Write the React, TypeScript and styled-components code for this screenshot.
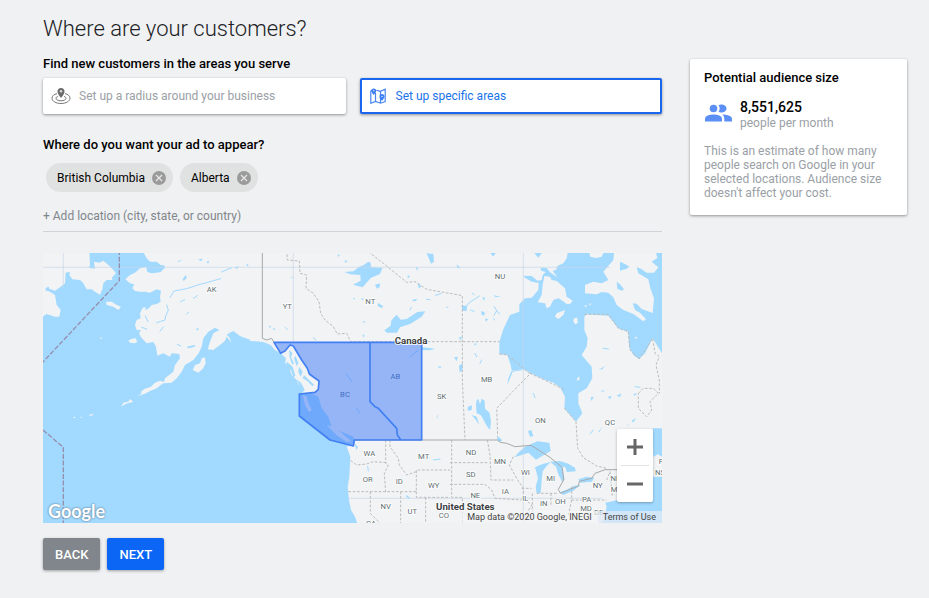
import React, { useState } from "react";
import styled, { createGlobalStyle, css } from "styled-components";

const GlobalStyle = createGlobalStyle`
  *, *::before, *::after { box-sizing: border-box; }
  body { margin: 0; background: #f0f1f3; color: #000; font-family: Roboto, sans-serif; font-size: 12px; }
  h1, h2, p, ul { margin: 0; padding: 0; }
  button, input { font: inherit; }
  button { cursor: pointer; }
`;

const Page = styled.div`
  display: flex;
  align-items: flex-start;
  gap: 28px;
  padding: 15px 22px 28px 43px;
`;
const Main = styled.main`
  flex: 1;
  min-width: 0;
`;
const Title = styled.h1`
  font-size: 22px;
  font-weight: 300;
  line-height: 28px;
  color: #202124;
`;
const SectionTitle = styled.h2`
  font-size: 13px;
  font-weight: 500;
  line-height: 16px;
`;
const AreaSection = styled.section`
  margin-top: 13px;
`;
const Options = styled.div`
  display: grid;
  grid-template-columns: 1fr 1fr;
  gap: 14px;
  margin-top: 6px;
`;
const Option = styled.button<{ $selected?: boolean }>`
  display: flex;
  align-items: center;
  gap: 8px;
  height: 36px;
  padding: 0 6px;
  border: 2px solid #fff;
  border-radius: 2px;
  background: #fff;
  color: #9aa0a6;
  font-size: 12px;
  text-align: left;
  box-shadow: 0 1px 3px rgba(0, 0, 0, 0.4);
  ${(p) => p.$selected && css`
    border-color: #1a66ee;
    color: #1a73e8;
  `}
`;
const LocationSection = styled.section`
  margin-top: 23px;
`;
const Chips = styled.ul`
  display: flex;
  gap: 7px;
  margin: 10px 0 0 3px;
  list-style: none;
`;
const Chip = styled.li`
  display: flex;
  align-items: center;
  gap: 7px;
  height: 29px;
  padding: 0 7px 0 11px;
  border-radius: 15px;
  background: #e0e2e1;
`;
const RemoveButton = styled.button`
  display: flex;
  padding: 0;
  border: 0;
  background: none;
`;
const LocationInput = styled.input`
  display: block;
  width: 100%;
  height: 32px;
  margin-top: 8px;
  padding: 0;
  border: 0;
  border-bottom: 1px solid #d0d2d5;
  background: none;
  outline: none;
  color: #3c4043;
  &::placeholder { color: #80868b; opacity: 1; }
`;
const MapFrame = styled.section`
  position: relative;
  height: 270px;
  margin-top: 21px;
  overflow: hidden;
  background: #a2daff;
`;
const MapSvg = styled.svg`
  display: block;
  width: 100%;
  height: 100%;
`;
const MapLogo = styled.div`
  position: absolute;
  left: 5px;
  bottom: 0;
  color: #fff;
  font-family: Lato, sans-serif;
  font-size: 18px;
  font-weight: 700;
  line-height: 24px;
  text-shadow: 0 0 2px #6d8ca6, 0 0 2px #6d8ca6;
`;
const ZoomControl = styled.div`
  position: absolute;
  right: 9px;
  bottom: 21px;
  width: 36px;
  padding: 0 4px;
  border-radius: 2px;
  background: #fff;
  box-shadow: 0 1px 3px rgba(0, 0, 0, 0.3);
`;
const ZoomButton = styled.button`
  display: flex;
  align-items: center;
  justify-content: center;
  width: 100%;
  height: 36px;
  padding: 0;
  border: 0;
  background: none;
  & + & { height: 37px; border-top: 1px solid #e2e2e2; }
`;
const Attribution = styled.div`
  position: absolute;
  right: 0;
  bottom: 0;
  display: flex;
  font-size: 9px;
  line-height: 12px;
  color: #444;
`;
const Credit = styled.span`
  padding: 0 6px;
  background: rgba(245, 245, 245, 0.6);
`;
const Terms = styled.a`
  padding: 0 6px 0 5px;
  background: rgba(225, 234, 245, 0.75);
  color: #444;
  text-decoration: none;
`;
const Actions = styled.div`
  display: flex;
  gap: 7px;
  margin-top: 15px;
`;
const ActionButton = styled.button<{ $primary?: boolean }>`
  height: 32px;
  padding: 0 12px;
  border: 0;
  border-radius: 2px;
  background: ${(p) => (p.$primary ? "#0b66f5" : "#80868b")};
  color: #fff;
  font-size: 13px;
  font-weight: 500;
  box-shadow: 0 1px 3px rgba(0, 0, 0, 0.35);
`;
const AudienceCard = styled.aside`
  flex: 0 0 217px;
  margin-top: 44px;
  padding: 11px 14px 15px;
  border-radius: 2px;
  background: #fff;
  box-shadow: 0 1px 3px rgba(0, 0, 0, 0.4);
`;
const CardTitle = styled.h2`
  font-size: 13px;
  font-weight: 500;
  line-height: 16px;
`;
const Audience = styled.div`
  display: flex;
  align-items: flex-start;
  gap: 8px;
  margin-top: 13px;
  & > svg { margin-top: 5px; }
`;
const AudienceCount = styled.p`
  font-size: 14px;
  font-weight: 500;
  line-height: 16px;
`;
const Muted = styled.p`
  font-size: 12px;
  line-height: 16px;
  color: #9aa0a6;
`;
const Note = styled(Muted)`
  margin-top: 13px;
  line-height: 14px;
`;

const RadiusIcon = () => (
  <svg width="20" height="18" viewBox="0 0 20 18" fill="none" aria-hidden="true">
    <path d="M6 6.600C3 7.300 1 9 1 11.200C1 14.200 5 16.500 10 16.500S19 14.200 19 11.200C19 9 17 7.300 14 6.600" stroke="#777" />
    <path d="M7 9.400C5.700 9.800 5 10.400 5 11.300C5 12.700 7.200 13.800 10 13.800S15 12.700 15 11.300C15 10.400 14.300 9.800 13 9.400" stroke="#777" />
    <path d="M10 1C7.900 1 6.500 2.500 6.500 4.500C6.500 7 10 11 10 11S13.500 7 13.500 4.500C13.500 2.500 12.100 1 10 1Z" fill="#6b6b6b" />
    <circle cx="10" cy="4.300" r="1.200" fill="#ddd" />
  </svg>
);

const AreasIcon = () => (
  <svg width="20" height="16" viewBox="-2 0 20 16" fill="none" aria-hidden="true">
    <g stroke="#4a86f0" strokeWidth="1.200">
      <path d="M2.500 2L.8 3V15.200L5.500 13.500L10.500 15.200L15.200 13.500V1.200L12.500 2.400M6.500 2.200L10 3.400L12.500 2.400M5.500 5V13.500M10.500 3.500V15" />
    </g>
    <path d="M3.800 .4C2.300 .4 1.300 1.400 1.300 2.800C1.300 4.500 3.800 7 3.800 7S6.300 4.500 6.300 2.800C6.300 1.400 5.300 .4 3.800 .4ZM12 6C10.500 6 9.500 7.100 9.500 8.500C9.500 10.200 12 12.800 12 12.800S14.500 10.200 14.500 8.500C14.500 7.100 13.500 6 12 6Z" fill="#3b7cf0" />
    <circle cx="3.800" cy="2.800" r=".8" fill="#cfe0ff" /><circle cx="12" cy="8.500" r=".8" fill="#cfe0ff" />
  </svg>
);

const RemoveIcon = () => (
  <svg width="14" height="14" viewBox="0 0 14 14" aria-hidden="true">
    <circle cx="7" cy="7" r="7" fill="#9b9b9b" />
    <path d="M4 4L10 10M10 4L4 10" stroke="#e8e8e8" strokeWidth="1.200" />
  </svg>
);

const PeopleIcon = () => (
  <svg width="28" height="18" viewBox="0 0 28 18" fill="#5b8ff5" aria-hidden="true">
    <circle cx="9.500" cy="4.500" r="3.800" />
    <path d="M14.500 7.800C16.100 6 16.100 3 14.500 1.200C16.800 -.2 22.500 .6 22.500 4.500S16.800 9.200 14.500 7.800Z" />
    <path d="M1 17.500V14.700C1 11.600 6 10.400 9.500 10.400S18 11.600 18 14.700V17.500Z" />
    <path d="M18.200 10.500C22 10.500 28 11.800 28 14.700V17.500H20.300V14.700C20.300 12.800 19.600 11.500 18.200 10.500Z" />
  </svg>
);

const LAND = "#f1f3f4";
const WATER = "#a2daff";

/* Each map column is drawn in its own local space and shifted into the sheet. */
const COLUMNS = { west: -9, middle: 621, east: 1221 };
type Column = keyof typeof COLUMNS;

const LABELS: [Column, number, number, string][] = [
  ["west", 515, 118, "AK"], ["middle", 112, 169, "YT"], ["middle", 361, 153, "NT"],
  ["middle", 575, 440, "SK"], ["middle", 358, 611, "WA"], ["middle", 353, 687, "OR"],
  ["middle", 448, 694, "ID"], ["middle", 521, 619, "MT"], ["middle", 551, 705, "WY"],
  ["middle", 407, 770, "NV"], ["middle", 487, 784, "UT"], ["middle", 582, 797, "CO"],
  ["middle", 363, 821, "CA"], ["east", 150, 79, "NU"], ["east", 110, 388, "MB"],
  ["east", 271, 510, "ON"], ["east", 480, 516, "QC"], ["east", 63, 607, "ND"],
  ["east", 150, 634, "MN"], ["east", 62, 672, "SD"], ["east", 226, 667, "WI"],
  ["east", 302, 686, "MI"], ["east", 76, 735, "NE"], ["east", 166, 723, "IA"],
  ["east", 226, 745, "IL"], ["east", 281, 761, "IN"], ["east", 331, 753, "OH"],
  ["east", 410, 748, "PA"], ["east", 408, 774, "MD"], ["east", 443, 705, "NY"],
  ["east", 446, 787, "DE"], ["east", 498, 686, "NH"], ["east", 500, 718, "MA"],
  ["east", 630, 667, "NS"], ["east", 640, 634, "PE"],
];

const MapLabel = styled.text<{ $country?: boolean; $tint?: boolean }>`
  font-family: Roboto, sans-serif;
  font-size: ${(p) => (p.$country ? 29 : 23)}px;
  font-weight: ${(p) => (p.$country ? 700 : 400)};
  fill: ${(p) => (p.$country ? "#3c4043" : p.$tint ? "#4a6588" : "#5c6c6f")};
  stroke: ${(p) => (p.$tint ? "none" : "#fff")};
  stroke-width: 5px;
  stroke-linejoin: round;
  paint-order: stroke;
  text-anchor: middle;
`;

const Dashed = styled.path`
  fill: none;
  stroke: #bcbcbc;
  stroke-width: 3px;
  stroke-dasharray: 8 5;
`;
const Solid = styled.path`
  fill: none;
  stroke: #a9a9a9;
  stroke-width: 3px;
`;
const Maritime = styled.path`
  fill: none;
  stroke: #958fae;
  stroke-width: 4px;
  stroke-dasharray: 15 5;
`;
const Stream = styled.path`
  fill: none;
  stroke: #a2daff;
  stroke-width: 3px;
  stroke-linecap: round;
`;
const Graticule = styled.path`
  fill: none;
  stroke: #c9d5e9;
  stroke-width: 2px;
`;
const RegionOutline = styled.path`
  fill: none;
  stroke: #4280f3;
  stroke-width: 5px;
  stroke-linejoin: round;
`;

const RegionMap = () => (
  <MapSvg viewBox="0 0 1857 810" preserveAspectRatio="xMidYMid slice" role="img" aria-label="Map of the selected locations">
    <g transform="translate(-9 -9)">
      <path fill={LAND} d="M312 0V10L320 25L330 35L350 35L362 45L374 50L370 58L362 66L350 68L335 70L322 66L318 50L300 55L285 68L270 75L256 88L270 100L283 103L277 115L285 123L300 125L315 125L330 128L350 118L363 122L360 140L362 155L350 162L335 165L325 176L315 180L318 172L308 173L300 190L302 205L290 210L285 225L290 240L303 240L297 250L303 262L320 280L340 276L348 290L352 317L370 310L390 320L395 310L418 312L420 325L405 345L400 365L375 385L372 396L360 392L345 398L325 418L290 440L345 416L370 400L395 398L410 385L425 365L435 345L460 330L476 310L485 290L490 265L505 245L525 233L538 240L520 250L510 275L503 298L520 300L540 285L555 272L560 260L575 278L568 262L560 254L572 247L580 243L600 258L625 268L680 277V0Z" />
      <path fill={LAND} d="M0 0H148L150 45L147 54L165 56L162 35L178 38L190 32L205 45L220 60L228 70L215 83L218 90L200 90L190 100L187 118L180 134L165 125L155 118L140 118L130 100L120 90L97 88L88 75L90 65L77 68L75 100L60 112L45 122L32 118L15 120L30 125L45 135L50 165L62 180L58 200L45 200L20 192L0 205Z" />
      <path fill={LAND} d="M198 155L215 155L230 165L243 170L235 180L220 170L200 165ZM265 272L275 266L287 265L292 275L285 280L270 278ZM180 262L188 265L182 267ZM495 322L497 340L490 355L475 368L458 360L465 345L480 340L485 325ZM303 425L313 417L340 408L355 402L362 405L350 415L330 422L318 430L305 434ZM243 470L250 458L265 455L270 447L280 455L258 461ZM148 494L160 491L158 496L149 498ZM98 501L108 501L104 505ZM120 501L126 500L124 504Z" />
      <path fill={WATER} d="M412 35L425 28L418 36ZM475 28L488 26L483 34ZM500 35L508 32L504 42ZM350 48L372 45L374 56L354 60ZM585 52L596 48L590 58ZM428 88L438 74L440 84L431 93ZM440 290L467 284L462 291L445 295ZM470 232L477 238L470 242ZM17 114L26 110L30 120L18 122ZM618 45L624 42L625 50Z" />
      <Stream d="M390 142L402 123L440 116L480 103L500 98L542 86M380 165L385 180L377 198L375 210L350 218M422 155L434 149M440 192L446 187M360 244L370 231M460 145L472 137M545 66L575 53M637 21L643 14M412 283L422 288M316 198L324 215M305 232L320 237" />
      <Graticule d="M0 52H630M70 0V115" />
      <Maritime d="M238 0V92L5 340M9 540L70 592V830" />
    </g>

    <g transform="translate(621 -9)">
      <path fill={LAND} d="M0 0V273L38 275L62 285L75 300L95 313L108 325L105 338L118 352L125 375L140 390L145 403L165 419L155 430L190 433L205 440L215 475L235 500L245 530L285 550L310 560L315 580L290 590L295 604L301 620L300 640L298 680L293 710L297 750L303 780L315 800L325 830H680V0Z" />
      <path fill={LAND} d="M158 434L170 440L175 460L185 480L178 487L165 465ZM230 525L260 533L285 558L305 574L290 576L260 556Z" />
      <path fill={WATER} d="M118 300L127 310L123 322L132 340L127 344L119 322ZM137 318L145 340L140 348L132 325ZM110 335L128 350L136 377L130 382L123 360L108 350ZM147 350L158 365L152 380L145 366ZM162 375L180 393L192 404L187 409L172 393L158 385ZM140 388L154 400L163 418L151 411Z" />
      <path fill={WATER} d="M283 66L310 64L328 50L340 46L355 35L362 38L363 51L397 54L390 72L362 84L338 112L309 104L332 92L331 75L301 73ZM375 104L390 100L389 112L381 116ZM384 159L400 169L395 174L383 168ZM403 241L422 227L424 211L440 194L452 209L470 207L502 186L526 184L515 200L480 222L450 232L441 248L410 248ZM530 10L550 12L552 35L543 41L535 22ZM620 43L632 54L622 55ZM635 166L651 168L650 183L637 182ZM488 149L502 146L497 153L487 154ZM515 292L540 294L555 297L538 301L513 300ZM562 350L574 349L571 355ZM612 320L624 318L617 332ZM624 343L636 344L638 361L628 364ZM473 74L480 80L473 85ZM629 260L635 263L629 270ZM498 50L505 55L500 62ZM503 99L514 109L507 116ZM57 226L63 229L60 236ZM70 232L77 239L70 240ZM263 12L270 17L264 20ZM283 33L292 31L288 39ZM310 144L317 145L311 149ZM335 144L342 147L335 151ZM337 254L344 254L341 263ZM560 500L563 492L562 508ZM314 580L324 592L319 600ZM470 735L481 745L478 747L467 739Z" />
      <Stream d="M124 84L128 80M105 232L112 238M480 180L484 172M556 136L573 131M530 148L540 149M590 172L594 171M550 630L570 627M190 263L198 270M340 215L345 216M353 650L355 663M290 372L305 395M320 475L330 490M480 320L505 300" />
      <Graticule d="M0 52H600M130 0V275M295 745H600" />
      <Dashed d="M110 0L112 30L148 33L150 70L170 75L168 115L190 130L207 155L212 190L225 210L250 230L262 252L290 250L302 275H600M355 5L400 40L470 97L495 95L530 118L637 137" />
      <Dashed d="M407 570V640L415 645L403 670L407 725M302 632L320 645L350 642L370 635L412 638M295 725H499V660H605V742H499V725M361 725V790L400 830M452 725V830M420 570V590L445 625L448 645L470 675L499 665M605 570V660M527 742V830" />
      <Solid d="M37 0V265L50 270L65 265L72 277M313 570H600" />
      <MapLabel $tint x="436" y="388">AB</MapLabel>
      <MapLabel $tint x="285" y="440">BC</MapLabel>
      <path d="M72 277L92 310L105 303L120 285L130 288L155 330L172 355L178 372L207 393L205 418L195 427L148 432V498L240 570L310 588L313 570H515V277Z" fill="#3b78fa" fillOpacity=".5" />
      <RegionOutline d="M72 277L92 310L105 303L120 285L130 288L155 330L172 355L178 372L207 393L205 418L195 427L148 432V498L240 570L310 588L313 570H515V277ZM360 277V455L375 470L385 475L440 535L442 555L452 569" />
    </g>

    <g transform="translate(1221 -9)">
      <rect width="680" height="840" fill={LAND} />
      <path fill={WATER} d="M355 0L350 25L340 40L322 48L318 60L308 62L322 82L300 67L290 54L272 53L273 62L287 66L278 75L275 90L262 92L245 78L225 77L220 80L245 95L266 99L265 120L245 143L225 145L208 163L208 185L180 195L160 238L148 275L148 312L172 315L182 345L185 362L220 358L240 368L280 388L310 398L330 412L345 440L343 475L378 515L397 490L385 460L385 430L410 415L427 385L425 350L395 315L410 290L413 265L403 240L403 200L410 193L475 197L505 235L535 245L537 290L550 315L567 327L585 310L608 265L636 310L680 330V0ZM222 360L207 360L184 364L175 385L172 405L188 365Z" />
      <path fill={LAND} d="M493 0L490 30L460 65L475 90L455 100L430 95L405 105L405 130L440 133L455 126L475 128L490 142L500 165L520 180L550 192L580 214L588 208L570 188L555 180L548 160L560 161L575 177L608 189L612 145L601 115L595 88L565 70L560 52L573 56L590 68L612 68L625 52L605 35L622 24L616 0ZM418 0L420 20L440 24L455 20L465 0Z" />
      <path fill={LAND} d="M283 78L300 80L305 90L320 93L345 115L350 140L368 152L360 162L348 161L340 154L325 145L310 150L300 170L290 175L285 160L263 157L275 135L278 105ZM320 190L345 180L340 195L325 207L315 200ZM372 205L382 203L383 220L375 223L370 214ZM383 382L388 380L388 390L380 392ZM402 167L412 166L407 172ZM418 161L424 160L420 168ZM553 260L562 262L558 268Z" />
      <path fill={WATER} d="M510 35L525 42L538 50L530 56L510 62ZM500 95L510 103L522 118L515 122L502 116ZM252 8H276L265 23ZM120 8H137L130 20ZM20 43L32 54L22 55ZM35 166L51 168L50 183L37 182ZM131 136L153 140L136 141ZM97 143L105 141L102 153ZM93 184L104 186L103 196L96 196ZM105 206L115 207L108 215ZM28 260L39 263L29 270ZM75 278L80 283L72 287ZM12 322L23 320L20 334ZM27 347L38 340L37 363L29 366ZM445 360L467 347L457 357ZM80 450L85 447L90 463L95 446L104 452L105 476L119 489L123 515L120 540L110 527L93 496L80 490L78 465ZM54 470L66 466L65 480L53 482ZM65 495L80 500L88 525L76 508ZM234 544L244 540L250 558L240 560ZM473 440L485 438L480 448ZM500 437L514 430L510 441ZM545 512L558 503L550 518ZM550 432L562 430L553 438ZM422 442L432 440L424 453ZM445 545L456 530L449 545ZM530 522L540 528L532 525ZM140 560L150 563L157 572L145 575Z" />
      <Stream d="M45 172L60 156L70 150L88 138M133 170L140 182L149 192M140 182L132 196M67 130L73 134M460 295L475 297M62 180L72 184M75 310L80 320M250 430L255 443M420 552L430 540M455 423H462M130 205L134 210M555 410L570 412M95 330L90 340" />
      <path fill={WATER} d="M193 622L205 608L225 590L262 574L298 578L302 603L278 617L258 629L235 608L215 615ZM255 652L270 645L278 642L302 636L290 648L278 664L275 690L272 729L260 730L257 710L264 685ZM300 635L330 633L355 641L375 653L377 664L350 666L346 652L336 650L344 688L337 697L325 673L318 650ZM329 727L350 719L373 707L392 705L370 722L340 735ZM385 688L410 680L433 683L425 695L390 698ZM470 770L463 805L448 830H680V680H600L590 752L500 751L466 758ZM608 535H680V615L650 612L636 620L624 613L610 620Z" />
      <Graticule d="M0 52H480M220 0V830M0 745H455" />
      <Dashed d="M0 130L37 137V390L45 570M0 275H148M148 312L172 315L205 342L240 372L188 425L140 475L143 560M240 370L280 388L345 420M403 193H475L505 235L535 245L540 300L567 327L608 265L615 310L628 320L618 345L628 390V430M343 475L378 515L383 595L400 623L440 648L470 655M565 430L580 415L610 415L625 430L600 455L605 480L590 500L565 475ZM0 638H113M112 570L120 615L123 690H190M0 703H105L125 720L135 745L215 750M5 570V742H37V830M190 620L178 645L200 685L220 715V745L245 765L225 800M215 715H245M247 730V785M260 730H325M303 730V765M365 710V750H470M470 690L480 665L487 740M365 750L355 795" />
      <Solid d="M0 570H145L150 577L170 580L195 590L243 586L300 622L337 653L341 690L325 718L331 730L385 708L388 694L425 685L435 670L465 659H530" />
    </g>

    {LABELS.map(([column, x, y, name]) => (
      <MapLabel key={name} x={COLUMNS[column] + x} y={y - 1}>{name}</MapLabel>
    ))}
    <MapLabel $country x="1104" y="272">Canada</MapLabel>
    <MapLabel $country x="1267" y="770">United States</MapLabel>
  </MapSvg>
);

const INITIAL_LOCATIONS = ["British Columbia", "Alberta"];

export default function App() {
  const [mode, setMode] = useState<"radius" | "areas">("areas");
  const [locations, setLocations] = useState(INITIAL_LOCATIONS);

  return (
    <>
      <GlobalStyle />
      <Page>
        <Main>
          <Title>Where are your customers?</Title>
          <AreaSection>
            <SectionTitle>Find new customers in the areas you serve</SectionTitle>
            <Options>
              <Option type="button" aria-pressed={mode === "radius"} $selected={mode === "radius"} onClick={() => setMode("radius")}>
                <RadiusIcon />
                Set up a radius around your business
              </Option>
              <Option type="button" aria-pressed={mode === "areas"} $selected={mode === "areas"} onClick={() => setMode("areas")}>
                <AreasIcon />
                Set up specific areas
              </Option>
            </Options>
          </AreaSection>
          <LocationSection>
            <SectionTitle>Where do you want your ad to appear?</SectionTitle>
            <Chips>
              {locations.map((name) => (
                <Chip key={name}>
                  {name}
                  <RemoveButton type="button" aria-label={`Remove ${name}`} onClick={() => setLocations(locations.filter((l) => l !== name))}>
                    <RemoveIcon />
                  </RemoveButton>
                </Chip>
              ))}
            </Chips>
            <LocationInput aria-label="Add location" placeholder="+ Add location (city, state, or country)" />
          </LocationSection>
          <MapFrame>
            <RegionMap />
            <MapLogo>Google</MapLogo>
            <Attribution>
              <Credit>Map data ©2020 Google, INEGI</Credit>
              <Terms href="#terms">Terms of Use</Terms>
            </Attribution>
            <ZoomControl>
              <ZoomButton type="button" aria-label="Zoom in">
                <svg width="16" height="16" viewBox="0 0 16 16" aria-hidden="true"><path d="M8 0V16M0 8H16" stroke="#666" strokeWidth="3" /></svg>
              </ZoomButton>
              <ZoomButton type="button" aria-label="Zoom out">
                <svg width="16" height="16" viewBox="0 0 16 16" aria-hidden="true"><path d="M0 8H16" stroke="#666" strokeWidth="3" /></svg>
              </ZoomButton>
            </ZoomControl>
          </MapFrame>
          <Actions>
            <ActionButton type="button">BACK</ActionButton>
            <ActionButton type="button" $primary>NEXT</ActionButton>
          </Actions>
        </Main>
        <AudienceCard>
          <CardTitle>Potential audience size</CardTitle>
          <Audience>
            <PeopleIcon />
            <div>
              <AudienceCount>8,551,625</AudienceCount>
              <Muted>people per month</Muted>
            </div>
          </Audience>
          <Note>This is an estimate of how many people search on Google in your selected locations. Audience size doesn't affect your cost.</Note>
        </AudienceCard>
      </Page>
    </>
  );
}
